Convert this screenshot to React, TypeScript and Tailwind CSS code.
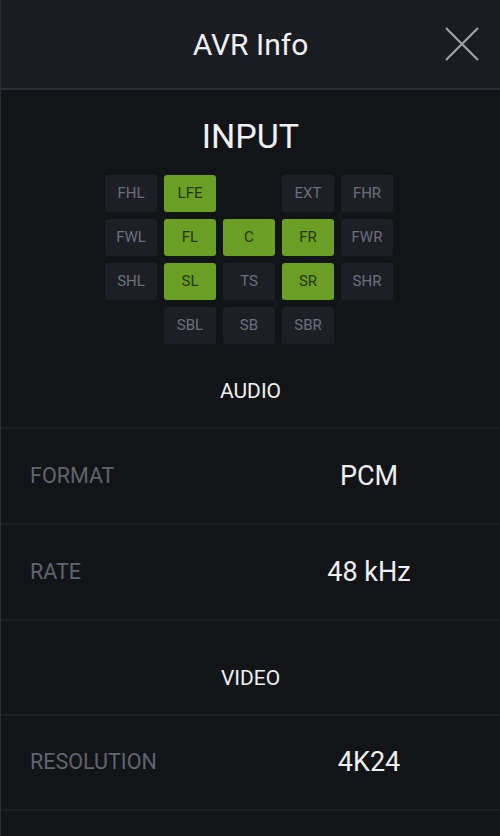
import clsx from 'clsx'

const grid: (string | null)[][] = [
  ['FHL', 'LFE', null, 'EXT', 'FHR'],
  ['FWL', 'FL', 'C', 'FR', 'FWR'],
  ['SHL', 'SL', 'TS', 'SR', 'SHR'],
  [null, 'SBL', 'SB', 'SBR', null],
]

const active = new Set(['LFE', 'FL', 'C', 'FR', 'SL', 'SR'])

function InfoRow({ label, value, className }: { label: string; value: string; className?: string }) {
  return (
    <div className={clsx('flex items-center border-b-2 border-[#1c1e23]', className)}>
      <span className="w-[237px] pl-[29px] text-[21.5px] text-[#5f646e]">{label}</span>
      <span className="flex-1 text-center text-[27px] text-[#eef0f2]">{value}</span>
    </div>
  )
}

function SectionTitle({ title, className }: { title: string; className?: string }) {
  return (
    <div
      className={clsx(
        'flex items-end justify-center border-b-2 border-[#1c1e23] pb-[22px] text-[21px] leading-[28px] text-[#eef0f2]',
        className,
      )}
    >
      {title}
    </div>
  )
}

export default function App() {
  return (
    <div
      className="h-[836px] w-[500px] overflow-hidden border-l border-[#2a2c31] bg-[#131418]"
      style={{ fontFamily: 'Roboto, "Noto Sans", sans-serif' }}
    >
      <header className="relative flex h-[90px] items-center justify-center border-b-2 border-[#2a2e34] bg-[#1b1c21]">
        <h1 className="text-[30px] text-[#eef0f2]">AVR Info</h1>
        <button type="button" aria-label="Close" className="absolute right-[20px] top-[26px] h-[36px] w-[36px]">
          <svg viewBox="0 0 36 36" className="h-full w-full" fill="none" stroke="#9ba1a8" strokeWidth="2.2">
            <path d="M2 2 L34 34 M34 2 L2 34" />
          </svg>
        </button>
      </header>

      <div className="pt-[25px] text-center text-[34px] leading-[42px] text-[#eef0f2]">INPUT</div>

      <div className="ml-[104px] mt-[18px] grid w-[288px] grid-cols-5 gap-[7px]">
        {grid.flat().map((name, i) =>
          name ? (
            <div
              key={i}
              className={clsx(
                'flex h-[37px] items-center justify-center rounded-[3px] text-[15px]',
                active.has(name) ? 'bg-[#6a9f23] text-[#27330f]' : 'bg-[#1e1f24] text-[#6a6f7e]',
              )}
            >
              {name}
            </div>
          ) : (
            <div key={i} className="h-[37px]" />
          ),
        )}
      </div>

      <SectionTitle title="AUDIO" className="h-[85px]" />
      <InfoRow label="FORMAT" value="PCM" className="h-[96px]" />
      <InfoRow label="RATE" value="48 kHz" className="h-[96px]" />
      <SectionTitle title="VIDEO" className="h-[95px]" />
      <InfoRow label="RESOLUTION" value="4K24" className="h-[95px]" />
    </div>
  )
}
